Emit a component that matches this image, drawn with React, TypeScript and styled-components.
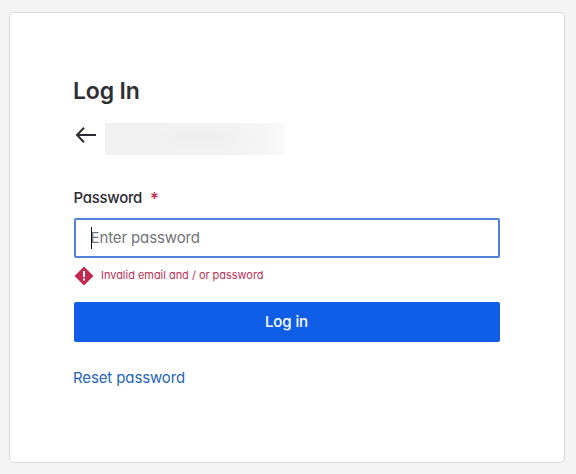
import React from "react";
import styled, { createGlobalStyle } from "styled-components";

const GlobalStyle = createGlobalStyle`
  *, *::before, *::after { box-sizing: border-box; }
  html, body { margin: 0; background: #f4f4f4; }
  body, input, button {
    font-family: Inter, "Open Sans", sans-serif;
    font-feature-settings: "cv11";
  }
`;

const Page = styled.main`
  height: 474px;
  padding: 12px 11px 11px 9px;
  overflow: hidden;
`;

const Card = styled.form`
  display: flex;
  flex-direction: column;
  height: 451px;
  padding: 62px 64px 0;
  border: 1px solid #d9d9d9;
  border-radius: 5px;
  background: #fff;
`;

const Title = styled.h1`
  margin: 0 0 0 -1px;
  height: 32px;
  font-size: 23px;
  font-weight: 600;
  line-height: 32px;
  letter-spacing: -0.15px;
  color: #2f3035;
`;

const Account = styled.div`
  display: flex;
  gap: 8px;
  height: 32px;
  margin-top: 16px;
`;

const BackButton = styled.button`
  width: 23px;
  height: 24px;
  padding: 0;
  border: 0;
  background: none;
  color: #2b2c32;
  svg { display: block; }
`;

const HiddenEmail = styled.div`
  width: 179px;
  height: 32px;
  background:
    radial-gradient(ellipse at 52% 45%, #efeff0 0%, rgba(240, 240, 241, 0) 48%),
    linear-gradient(90deg, #f1f1f2 0%, #f2f2f3 72%, #f6f6f7 90%, #fafafa 100%);
`;

const Label = styled.label`
  display: flex;
  gap: 8px;
  margin: 31px 0 0 -0.5px;
  height: 22px;
  font-size: 15px;
  font-weight: 500;
  line-height: 24px;
  letter-spacing: -0.3px;
  color: #2b2c32;
`;

const Required = styled.span`
  font-size: 17px;
  line-height: 26px;
  color: #c12a50;
`;

const Field = styled.div`
  position: relative;
  height: 40px;
  margin-top: 10px;
`;

const Input = styled.input`
  display: block;
  width: 100%;
  height: 40px;
  padding: 0 15px 1px 14.5px;
  border: 2px solid #5282d8;
  border-radius: 2px;
  outline: none;
  background: #fff;
  font-size: 15px;
  letter-spacing: -0.12px;
  &::placeholder { color: #737478; opacity: 1; }
`;

const Caret = styled.span`
  position: absolute;
  top: 9px;
  left: 17px;
  width: 1px;
  height: 22px;
  background: #111;
`;

const ErrorMessage = styled.div`
  display: flex;
  align-items: center;
  gap: 7px;
  height: 20px;
  margin-top: 8px;
  font-size: 11px;
  letter-spacing: -0.03px;
  color: #bd3055;
  svg { flex: none; }
  span { margin-bottom: 2px; }
`;

const Submit = styled.button`
  height: 40px;
  margin-top: 16px;
  padding: 0 1px 2px 0;
  border: 0;
  border-radius: 2px;
  background: #105ee7;
  color: #fff;
  font-size: 15px;
  font-weight: 500;
  letter-spacing: -0.1px;
`;

const ResetLink = styled.a`
  align-self: flex-start;
  margin: 25px 0 0 -1px;
  font-size: 15px;
  line-height: 22px;
  letter-spacing: -0.12px;
  color: #2565bb;
  text-decoration: none;
`;

export default function App() {
  return (
    <>
      <GlobalStyle />
      <Page>
        <Card onSubmit={(event) => event.preventDefault()}>
          <Title>Log In</Title>
          <Account>
            <BackButton type="button" aria-label="Back">
              <svg width="23" height="24" viewBox="0 0 23 24" fill="none" stroke="currentColor" strokeWidth="2">
                <path d="M10 4.8 L3 12 L10 19.2 M3 12 H22" />
              </svg>
            </BackButton>
            <HiddenEmail />
          </Account>
          <Label htmlFor="password">
            Password <Required>*</Required>
          </Label>
          <Field>
            <Input id="password" type="password" placeholder="Enter password" />
            <Caret />
          </Field>
          <ErrorMessage role="alert">
            <svg width="20" height="20" viewBox="0 0 20 20">
              <path
                d="M10 1.5 L18.5 10 L10 18.5 L1.5 10 Z"
                fill="#c12a50"
                stroke="#c12a50"
                strokeWidth="1.4"
                strokeLinejoin="round"
              />
              <path d="M10 5 V11 M10 12.6 V14.6" stroke="#fff" strokeWidth="2" />
            </svg>
            <span>Invalid email and / or password</span>
          </ErrorMessage>
          <Submit type="submit">Log in</Submit>
          <ResetLink href="#">Reset password</ResetLink>
        </Card>
      </Page>
    </>
  );
}
